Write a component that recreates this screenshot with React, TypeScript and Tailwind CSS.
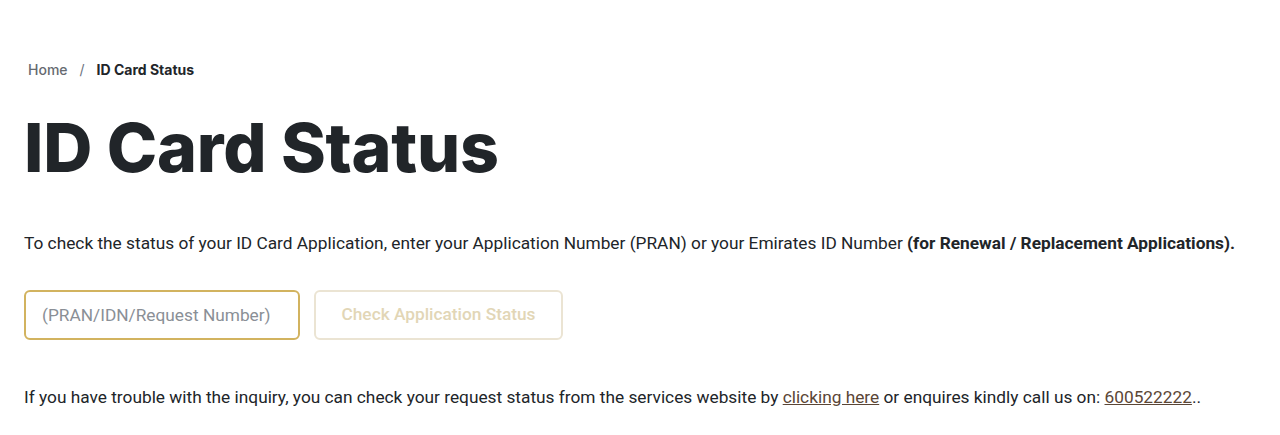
export default function App() {
  return (
    <div className="min-h-[435px] bg-white px-6 pt-[60px] text-[#212529]" style={{ fontFamily: "Roboto, 'Liberation Sans', sans-serif" }}>
      {/* Breadcrumb */}
      <nav className="flex items-center text-sm leading-5" style={{ fontFamily: "Inter, 'Liberation Sans', sans-serif" }}>
        <a href="#" className="ml-1 font-medium text-[#666a70]">Home</a>
        <span className="mx-[12px] text-[#6b7280]">/</span>
        <span className="font-bold text-[#212529]">ID Card Status</span>
      </nav>

      <h1
        className="mt-[29px] text-[68px] font-extrabold leading-[76px] tracking-[-0.25px] text-[#212529]"
        style={{ fontFamily: "Inter, 'Liberation Sans', sans-serif" }}
      >
        ID Card Status
      </h1>

      <p className="mt-[45px] text-[17.3px] leading-[26px] text-[#212529]">
        To check the status of your ID Card Application, enter your Application Number (PRAN) or your Emirates ID Number{" "}
        <b className="font-bold">(for Renewal / Replacement Applications).</b>
      </p>

      <div className="mt-[34px] flex gap-[14px]">
        <input
          type="text"
          placeholder="(PRAN/IDN/Request Number)"
          className="h-[50px] w-[276px] rounded-[6px] border-2 border-[#d2b35f] px-4 text-[17.3px] text-[#212529] outline-none placeholder:text-[#8a8f96]"
        />
        <button
          disabled
          className="h-[50px] w-[249px] rounded-[6px] border-2 border-[#ebe4d3] text-[17.3px] font-medium text-[#e2d6b6]"
        >
          Check Application Status
        </button>
      </div>

      <p className="mt-[44px] text-[17.3px] leading-[26px] text-[#212529]">
        If you have trouble with the inquiry, you can check your request status from the services website by{" "}
        <a href="#" className="text-[#5b4636] underline">clicking here</a> or enquires kindly call us on:{" "}
        <a href="#" className="text-[#5b4636] underline">600522222</a>..
      </p>
    </div>
  );
}
